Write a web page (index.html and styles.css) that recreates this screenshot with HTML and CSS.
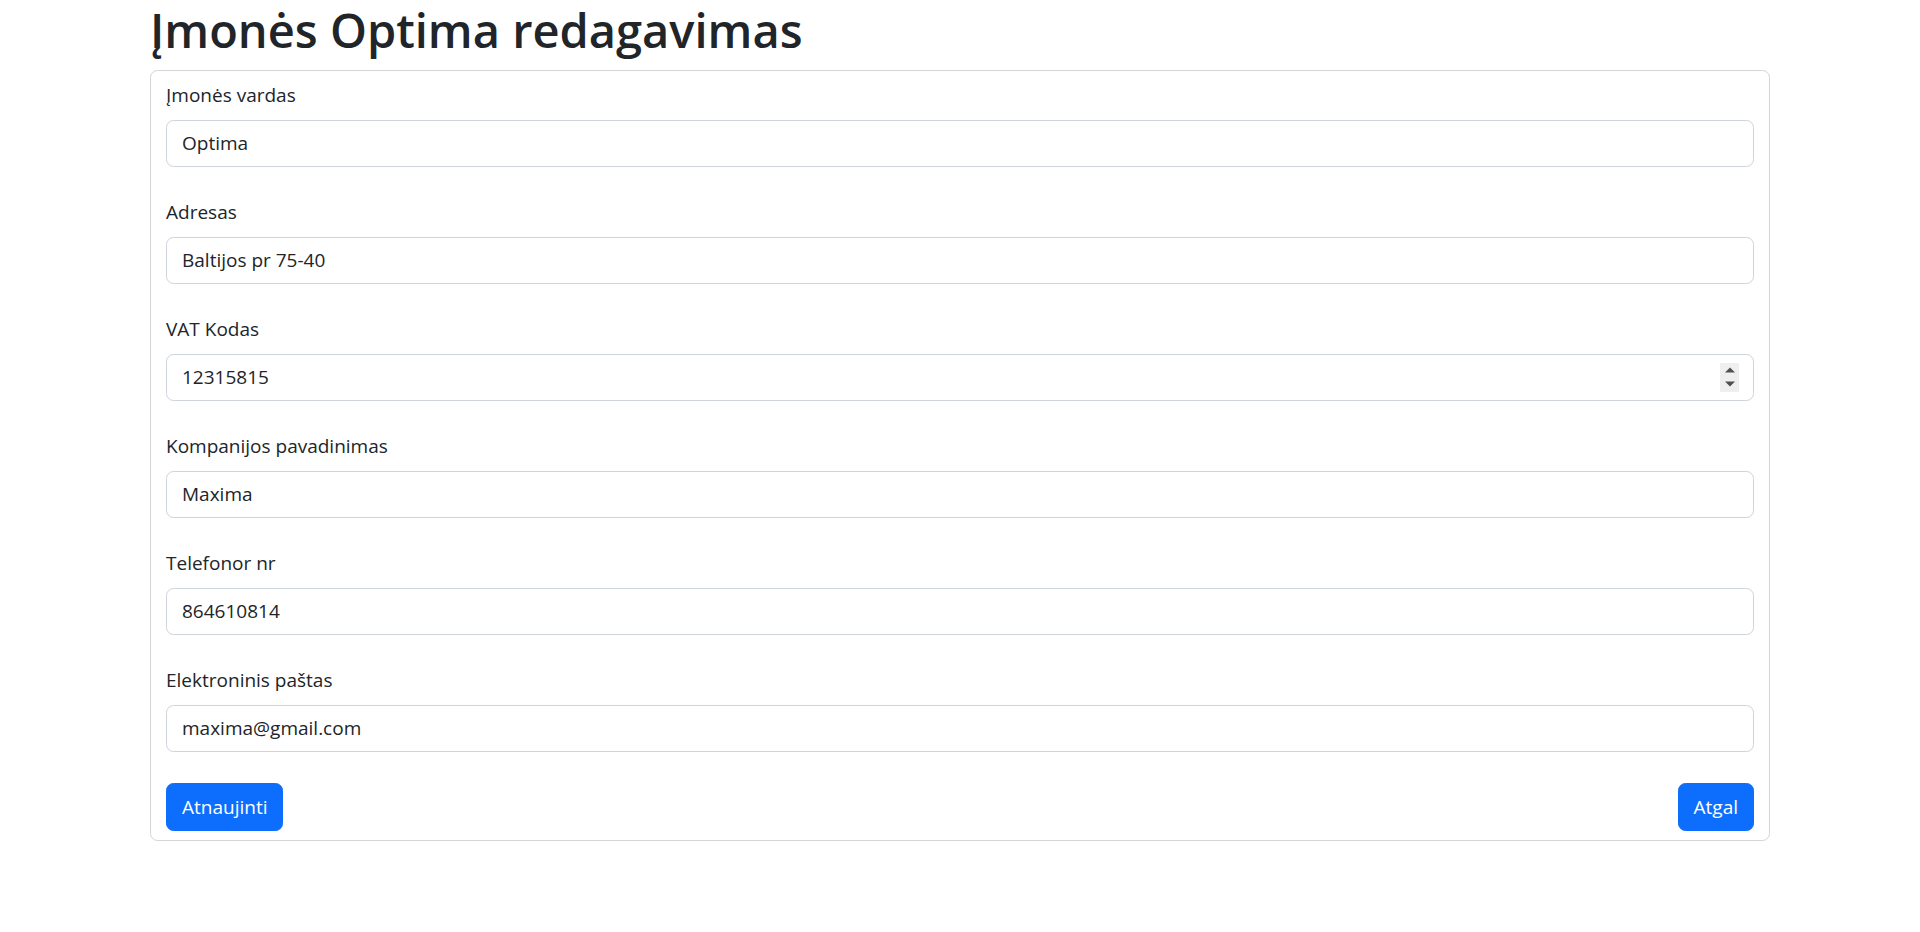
FILE: index.html
```html
<!DOCTYPE html>
<html lang="lt">
<head>
<meta charset="utf-8">
<title>Įmonės Optima redagavimas</title>
<link rel="stylesheet" href="styles.css">
</head>
<body>
<div class="container">
  <h1 class="title">Įmonės Optima redagavimas</h1>
  <form class="card">
    <div class="group">
      <label class="label" for="name">Įmonės vardas</label>
      <input class="control" id="name" type="text" value="Optima">
    </div>
    <div class="group">
      <label class="label" for="addr">Adresas</label>
      <input class="control" id="addr" type="text" value="Baltijos pr 75-40">
    </div>
    <div class="group">
      <label class="label" for="vat">VAT Kodas</label>
      <div class="number-wrap">
        <input class="control" id="vat" type="text" inputmode="numeric" value="12315815">
        <span class="spin">
          <svg width="12" height="26" viewBox="0 0 12 26"><path d="M1 8.5 L6 3.5 L11 8.5 Z" fill="#505050"/><path d="M1 17.5 L6 22.5 L11 17.5 Z" fill="#505050"/></svg>
        </span>
      </div>
    </div>
    <div class="group">
      <label class="label" for="comp">Kompanijos pavadinimas</label>
      <input class="control" id="comp" type="text" value="Maxima">
    </div>
    <div class="group">
      <label class="label" for="tel">Telefonor nr</label>
      <input class="control" id="tel" type="text" value="864610814">
    </div>
    <div class="group group-last">
      <label class="label" for="mail">Elektroninis paštas</label>
      <input class="control" id="mail" type="text" value="maxima@gmail.com">
    </div>
    <div class="actions">
      <button class="btn" type="button">Atnaujinti</button>
      <button class="btn" type="button">Atgal</button>
    </div>
  </form>
</div>
</body>
</html>
```
FILE: styles.css
```css
html, body {
  margin: 0;
  padding: 0;
  background: #fff;
}
body {
  font-family: "Open Sans", "Noto Sans", "Liberation Sans", sans-serif;
  color: #212529;
  font-size: 19px;
  line-height: 30px;
}
.container {
  width: 1620px;
  margin: 0 auto;
}
.title {
  margin: 0 0 10px;
  font-size: 47px;
  line-height: 60px;
  font-weight: 600;
  color: #212529;
}
.card {
  display: block;
  border: 1px solid #d3d4d5;
  border-radius: 7.5px;
  padding: 9px 15px 9.5px;
}
.group {
  margin-bottom: 30px;
}
.group-last {
  margin-bottom: 31px;
}
.label {
  display: block;
  margin-bottom: 9.5px;
  font-size: 19px;
  line-height: 30px;
}
.control {
  display: block;
  box-sizing: border-box;
  width: 100%;
  height: 47.5px;
  margin: 0;
  padding: 7.5px 15px;
  font-family: inherit;
  font-size: 19px;
  line-height: 30px;
  color: #212529;
  background: #fff;
  border: 1px solid #ced4da;
  border-radius: 7.5px;
  outline: none;
}
.number-wrap {
  position: relative;
}
.spin {
  position: absolute;
  right: 15px;
  top: 9px;
  width: 19px;
  height: 29px;
  background: #efefef;
  display: flex;
  align-items: center;
  justify-content: center;
}
.actions {
  display: flex;
  justify-content: space-between;
}
.btn {
  font-family: inherit;
  font-size: 19px;
  line-height: 30px;
  padding: 7.5px 15px;
  height: 47.5px;
  color: #fff;
  background: #0d6efd;
  border: 1px solid #0d6efd;
  border-radius: 7.5px;
  cursor: pointer;
}
```
